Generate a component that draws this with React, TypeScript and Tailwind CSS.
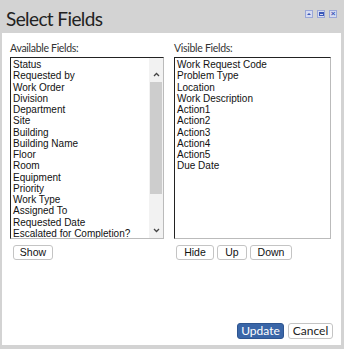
const available = [
  "Status",
  "Requested by",
  "Work Order",
  "Division",
  "Department",
  "Site",
  "Building",
  "Building Name",
  "Floor",
  "Room",
  "Equipment",
  "Priority",
  "Work Type",
  "Assigned To",
  "Requested Date",
  "Escalated for Completion?",
];

const visible = [
  "Work Request Code",
  "Problem Type",
  "Location",
  "Work Description",
  "Action1",
  "Action2",
  "Action3",
  "Action4",
  "Action5",
  "Due Date",
];

function SmallButton({ label, w }: { label: string; w: string }) {
  return (
    <button
      className={`${w} h-[15px] border border-[#c4c4c4] rounded-[3px] bg-white text-[10.5px] leading-[13px] text-[#111] font-['Liberation_Sans',Arial,sans-serif] flex items-center justify-center`}
    >
      {label}
    </button>
  );
}

export default function App() {
  return (
    <div className="w-[344px] h-[349px] bg-[#d3d3d3] flex flex-col pb-[4px] pl-[2px] pr-[3px]">
      <div className="h-[33px] flex items-start justify-between pl-[4px] pr-[4px]">
        <h1 className="mt-[7px] text-[19px] leading-[24px] text-[#222] font-['Lato',sans-serif] tracking-[-0.6px]">
          Select Fields
        </h1>
        <div className="flex gap-[4px] mt-[10px]">
          <span className="w-[8px] h-[8px] bg-[#d7dcf0] border border-[#9aa7d8] flex items-center justify-center">
            <span className="w-0 h-0 border-l-[2px] border-r-[2px] border-b-[2px] border-l-transparent border-r-transparent border-b-[#3a58b8]" />
          </span>
          <span className="w-[8px] h-[8px] bg-[#d7dcf0] border border-[#9aa7d8] flex items-center justify-center">
            <span className="w-[5px] h-[4px] border border-t-2 border-[#3a58b8]" />
          </span>
          <span className="w-[8px] h-[8px] bg-[#d7dcf0] border border-[#9aa7d8] flex items-center justify-center text-[#3a58b8] text-[8px] leading-none font-bold font-['Liberation_Sans',sans-serif]">
            ×
          </span>
        </div>
      </div>
      <div className="flex-1 bg-white flex flex-col px-[8px] pt-[9px]">
        <div className="flex gap-[10px]">
          <div className="w-[154px] flex flex-col">
            <div className="text-[10.5px] leading-[13px] text-[#333] font-['Lato',sans-serif] tracking-[-0.3px] mb-[2px]">
              Available Fields:
            </div>
            <div className="h-[182px] border border-[#bbb] border-l-[#222] border-t-[#222] flex">
              <div className="flex-1 pl-[2px] pt-[1px] overflow-hidden">
                {available.map((f) => (
                  <div
                    key={f}
                    className="text-[10px] leading-[11.27px] text-[#111] font-['Liberation_Sans',Arial,sans-serif] whitespace-nowrap"
                  >
                    {f}
                  </div>
                ))}
              </div>
              <div className="w-[14px] bg-[#f2f2f2] flex flex-col items-center">
                <div className="h-[24px] flex items-end pb-[5px]">
                  <svg width="7" height="5" viewBox="0 0 7 5">
                    <path d="M1 4 L3.5 1.5 L6 4" stroke="#444" strokeWidth="1.3" fill="none" />
                  </svg>
                </div>
                <div className="w-[12px] h-[112px] bg-[#cdcdcd]" />
                <div className="flex-1 flex items-end pb-[5px]">
                  <svg width="7" height="5" viewBox="0 0 7 5">
                    <path d="M1 1 L3.5 3.5 L6 1" stroke="#444" strokeWidth="1.3" fill="none" />
                  </svg>
                </div>
              </div>
            </div>
            <div className="mt-[6px] pl-[3px]">
              <SmallButton label="Show" w="w-[40px]" />
            </div>
          </div>
          <div className="w-[157px] flex flex-col">
            <div className="text-[10.5px] leading-[13px] text-[#333] font-['Lato',sans-serif] tracking-[-0.3px] mb-[2px]">
              Visible Fields:
            </div>
            <div className="h-[182px] border border-[#bbb] border-l-[#222] border-t-[#222] pl-[2px] pt-[1px]">
              {visible.map((f) => (
                <div
                  key={f}
                  className="text-[10px] leading-[11.27px] text-[#111] font-['Liberation_Sans',Arial,sans-serif] whitespace-nowrap"
                >
                  {f}
                </div>
              ))}
            </div>
            <div className="mt-[6px] pl-[2px] flex gap-[3px]">
              <SmallButton label="Hide" w="w-[38px]" />
              <SmallButton label="Up" w="w-[30px]" />
              <SmallButton label="Down" w="w-[42px]" />
            </div>
          </div>
        </div>
        <div className="flex-1" />
        <div className="flex justify-end gap-[4px] pb-[6px]">
          <button className="w-[47px] h-[16px] rounded-[3px] bg-[#3a66a8] border border-[#2e5590] text-white text-[12px] leading-[14px] font-['Lato',sans-serif] flex items-center justify-center">
            Update
          </button>
          <button className="w-[45px] h-[16px] rounded-[3px] bg-white border border-[#c4c4c4] text-[#222] text-[12px] leading-[14px] font-['Lato',sans-serif] flex items-center justify-center">
            Cancel
          </button>
        </div>
      </div>
    </div>
  );
}
